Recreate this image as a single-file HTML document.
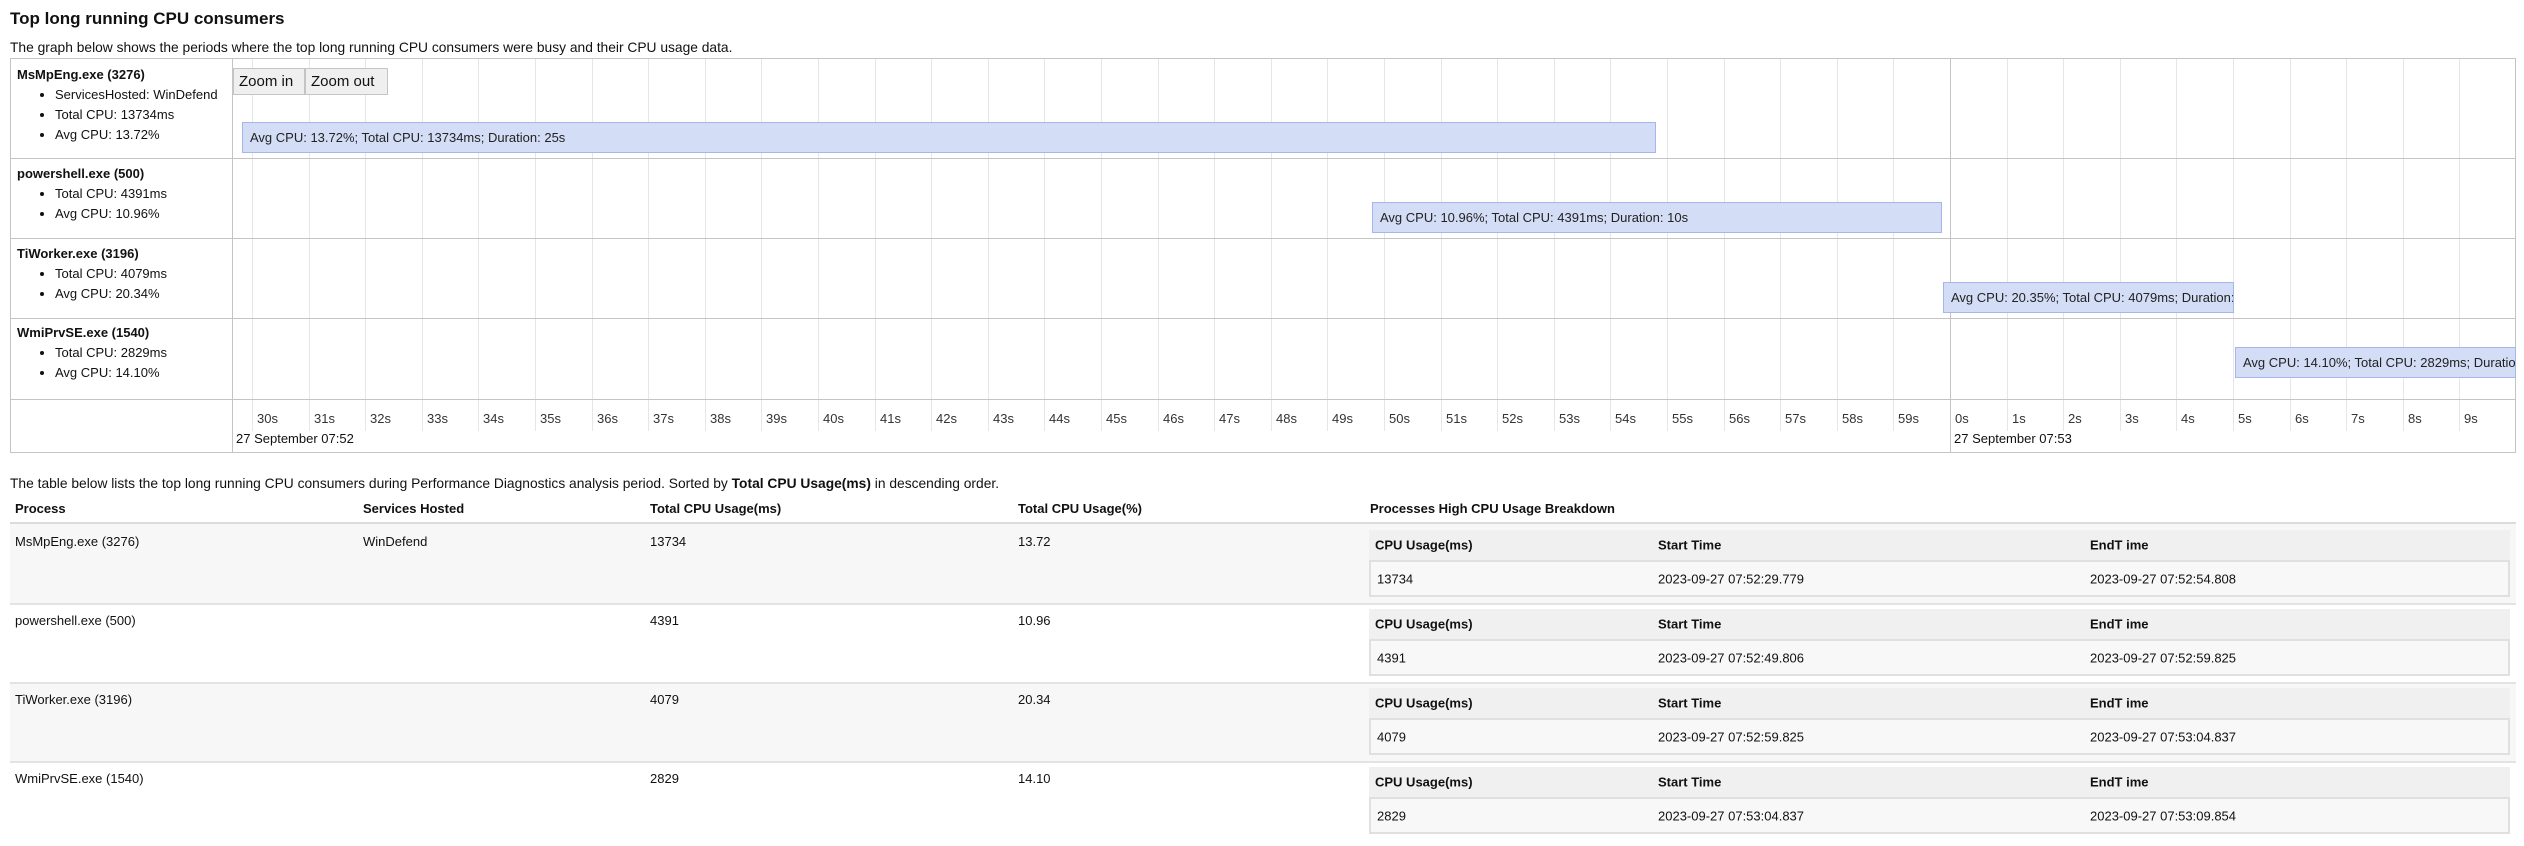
<!DOCTYPE html>
<html><head><meta charset="utf-8"><style>
*{margin:0;padding:0;box-sizing:border-box}
body{width:2524px;height:846px;background:#fff;font-family:"Liberation Sans",Arial,sans-serif;color:#111;font-size:13px;position:relative;overflow:hidden}
.a{position:absolute;white-space:nowrap;line-height:1}
.g{position:absolute;width:1px;background:#e6e6e6;top:59px;height:372px}
.t{position:absolute;top:411px;font-size:13px;color:#333}
.rl{position:absolute;left:10px;width:2506px;height:1px;background:#c4c4c4}
.bar{position:absolute;background:#d3ddf6;border:1px solid #a4b6ec;overflow:hidden;white-space:nowrap;font-size:13px;line-height:29px;padding-left:7px;color:#222}
b{font-weight:bold}
.lb{position:absolute;left:17px;font-size:13px;line-height:20px}
.lb ul{margin-left:38px;list-style:disc}
.row{position:absolute;left:10px;width:2506px}
.nt{position:absolute;left:1369px;width:1141px}
.nh{height:30px;background:#f0f0f0;font-weight:bold;position:relative}
.nd{height:37px;background:#f8f8f8;border:2px solid #e0e0e0;position:relative}
.nh span,.nd span{position:absolute;top:50%;transform:translateY(-50%)}
</style></head><body>
<div class="a" style="left:10px;top:10px;font-size:17px;font-weight:bold">Top long running CPU consumers</div>
<div class="a" style="left:10px;top:41px;font-size:13.8px">The graph below shows the periods where the top long running CPU consumers were busy and their CPU usage data.</div>

<div style="position:absolute;left:10px;top:58px;width:2506px;height:395px;border:1px solid #c4c4c4"></div>
<div style="position:absolute;left:232px;top:58px;width:1px;height:395px;background:#c4c4c4"></div>

<div class="g" style="left:252px"></div><div class="g" style="left:309px"></div><div class="g" style="left:365px"></div><div class="g" style="left:422px"></div><div class="g" style="left:478px"></div><div class="g" style="left:535px"></div><div class="g" style="left:592px"></div><div class="g" style="left:648px"></div><div class="g" style="left:705px"></div><div class="g" style="left:761px"></div><div class="g" style="left:818px"></div><div class="g" style="left:875px"></div><div class="g" style="left:931px"></div><div class="g" style="left:988px"></div><div class="g" style="left:1044px"></div><div class="g" style="left:1101px"></div><div class="g" style="left:1158px"></div><div class="g" style="left:1214px"></div><div class="g" style="left:1271px"></div><div class="g" style="left:1327px"></div><div class="g" style="left:1384px"></div><div class="g" style="left:1441px"></div><div class="g" style="left:1497px"></div><div class="g" style="left:1554px"></div><div class="g" style="left:1610px"></div><div class="g" style="left:1667px"></div><div class="g" style="left:1724px"></div><div class="g" style="left:1780px"></div><div class="g" style="left:1837px"></div><div class="g" style="left:1893px"></div><div class="g" style="left:1950px;background:#c4c4c4;height:394px"></div><div class="g" style="left:2007px"></div><div class="g" style="left:2063px"></div><div class="g" style="left:2120px"></div><div class="g" style="left:2176px"></div><div class="g" style="left:2233px"></div><div class="g" style="left:2290px"></div><div class="g" style="left:2346px"></div><div class="g" style="left:2403px"></div><div class="g" style="left:2459px"></div>

<div class="rl" style="top:158px"></div><div class="rl" style="top:238px"></div><div class="rl" style="top:318px"></div><div class="rl" style="top:399px"></div>

<div class="t" style="left:257px">30s</div><div class="t" style="left:314px">31s</div><div class="t" style="left:370px">32s</div><div class="t" style="left:427px">33s</div><div class="t" style="left:483px">34s</div><div class="t" style="left:540px">35s</div><div class="t" style="left:597px">36s</div><div class="t" style="left:653px">37s</div><div class="t" style="left:710px">38s</div><div class="t" style="left:766px">39s</div><div class="t" style="left:823px">40s</div><div class="t" style="left:880px">41s</div><div class="t" style="left:936px">42s</div><div class="t" style="left:993px">43s</div><div class="t" style="left:1049px">44s</div><div class="t" style="left:1106px">45s</div><div class="t" style="left:1163px">46s</div><div class="t" style="left:1219px">47s</div><div class="t" style="left:1276px">48s</div><div class="t" style="left:1332px">49s</div><div class="t" style="left:1389px">50s</div><div class="t" style="left:1446px">51s</div><div class="t" style="left:1502px">52s</div><div class="t" style="left:1559px">53s</div><div class="t" style="left:1615px">54s</div><div class="t" style="left:1672px">55s</div><div class="t" style="left:1729px">56s</div><div class="t" style="left:1785px">57s</div><div class="t" style="left:1842px">58s</div><div class="t" style="left:1898px">59s</div><div class="t" style="left:1955px">0s</div><div class="t" style="left:2012px">1s</div><div class="t" style="left:2068px">2s</div><div class="t" style="left:2125px">3s</div><div class="t" style="left:2181px">4s</div><div class="t" style="left:2238px">5s</div><div class="t" style="left:2295px">6s</div><div class="t" style="left:2351px">7s</div><div class="t" style="left:2408px">8s</div><div class="t" style="left:2464px">9s</div>
<div class="a" style="left:236px;top:432px;font-size:13px">27 September 07:52</div>
<div class="a" style="left:1954px;top:432px;font-size:13px">27 September 07:53</div>

<div class="lb" style="top:65px"><b>MsMpEng.exe (3276)</b><ul><li>ServicesHosted: WinDefend</li><li>Total CPU: 13734ms</li><li>Avg CPU: 13.72%</li></ul></div>
<div class="lb" style="top:164px"><b>powershell.exe (500)</b><ul><li>Total CPU: 4391ms</li><li>Avg CPU: 10.96%</li></ul></div>
<div class="lb" style="top:244px"><b>TiWorker.exe (3196)</b><ul><li>Total CPU: 4079ms</li><li>Avg CPU: 20.34%</li></ul></div>
<div class="lb" style="top:323px"><b>WmiPrvSE.exe (1540)</b><ul><li>Total CPU: 2829ms</li><li>Avg CPU: 14.10%</li></ul></div>

<div style="position:absolute;left:233px;top:68px;width:72px;height:27px;background:#efefef;border:1px solid #c4c4c4;font-size:15px;line-height:25px;padding-left:5px">Zoom in</div>
<div style="position:absolute;left:305px;top:68px;width:83px;height:27px;background:#efefef;border:1px solid #c4c4c4;font-size:15px;line-height:25px;padding-left:5px">Zoom out</div>

<div class="bar" style="left:242px;top:122px;width:1414px;height:31px">Avg CPU: 13.72%; Total CPU: 13734ms; Duration: 25s</div>
<div class="bar" style="left:1372px;top:202px;width:570px;height:31px">Avg CPU: 10.96%; Total CPU: 4391ms; Duration: 10s</div>
<div class="bar" style="left:1943px;top:282px;width:291px;height:31px">Avg CPU: 20.35%; Total CPU: 4079ms; Duration: 5s</div>
<div class="bar" style="left:2235px;top:347px;width:281px;height:31px">Avg CPU: 14.10%; Total CPU: 2829ms; Duration: 5s</div>

<div class="a" style="left:10px;top:477px;font-size:13.8px">The table below lists the top long running CPU consumers during Performance Diagnostics analysis period. Sorted by <b>Total CPU Usage(ms)</b> in descending order.</div>
<div class="a" style="left:15px;top:502px;font-weight:bold">Process</div>
<div class="a" style="left:363px;top:502px;font-weight:bold">Services Hosted</div>
<div class="a" style="left:650px;top:502px;font-weight:bold">Total CPU Usage(ms)</div>
<div class="a" style="left:1018px;top:502px;font-weight:bold">Total CPU Usage(%)</div>
<div class="a" style="left:1370px;top:502px;font-weight:bold">Processes High CPU Usage Breakdown</div>
<div class="row" style="top:522px;height:2px;background:#dcdcdc"></div>

<div class="row" style="top:524px;height:79px;background:#f7f7f7"></div>
<div class="row" style="top:603px;height:2px;background:#e3e3e3"></div>
<div class="row" style="top:682px;height:2px;background:#e3e3e3"></div>
<div class="row" style="top:684px;height:77px;background:#f7f7f7"></div>
<div class="row" style="top:761px;height:2px;background:#e3e3e3"></div>

<div class="a" style="left:15px;top:535px">MsMpEng.exe (3276)</div><div class="a" style="left:363px;top:535px">WinDefend</div><div class="a" style="left:650px;top:535px">13734</div><div class="a" style="left:1018px;top:535px">13.72</div>
<div class="a" style="left:15px;top:614px">powershell.exe (500)</div><div class="a" style="left:650px;top:614px">4391</div><div class="a" style="left:1018px;top:614px">10.96</div>
<div class="a" style="left:15px;top:693px">TiWorker.exe (3196)</div><div class="a" style="left:650px;top:693px">4079</div><div class="a" style="left:1018px;top:693px">20.34</div>
<div class="a" style="left:15px;top:772px">WmiPrvSE.exe (1540)</div><div class="a" style="left:650px;top:772px">2829</div><div class="a" style="left:1018px;top:772px">14.10</div>

<div class="nt" style="top:530px"><div class="nh"><span style="left:6px">CPU Usage(ms)</span><span style="left:289px">Start Time</span><span style="left:721px">EndT ime</span></div><div class="nd"><span style="left:6px">13734</span><span style="left:287px">2023-09-27 07:52:29.779</span><span style="left:719px">2023-09-27 07:52:54.808</span></div></div>
<div class="nt" style="top:609px"><div class="nh"><span style="left:6px">CPU Usage(ms)</span><span style="left:289px">Start Time</span><span style="left:721px">EndT ime</span></div><div class="nd"><span style="left:6px">4391</span><span style="left:287px">2023-09-27 07:52:49.806</span><span style="left:719px">2023-09-27 07:52:59.825</span></div></div>
<div class="nt" style="top:688px"><div class="nh"><span style="left:6px">CPU Usage(ms)</span><span style="left:289px">Start Time</span><span style="left:721px">EndT ime</span></div><div class="nd"><span style="left:6px">4079</span><span style="left:287px">2023-09-27 07:52:59.825</span><span style="left:719px">2023-09-27 07:53:04.837</span></div></div>
<div class="nt" style="top:767px"><div class="nh"><span style="left:6px">CPU Usage(ms)</span><span style="left:289px">Start Time</span><span style="left:721px">EndT ime</span></div><div class="nd"><span style="left:6px">2829</span><span style="left:287px">2023-09-27 07:53:04.837</span><span style="left:719px">2023-09-27 07:53:09.854</span></div></div>
</body></html>
